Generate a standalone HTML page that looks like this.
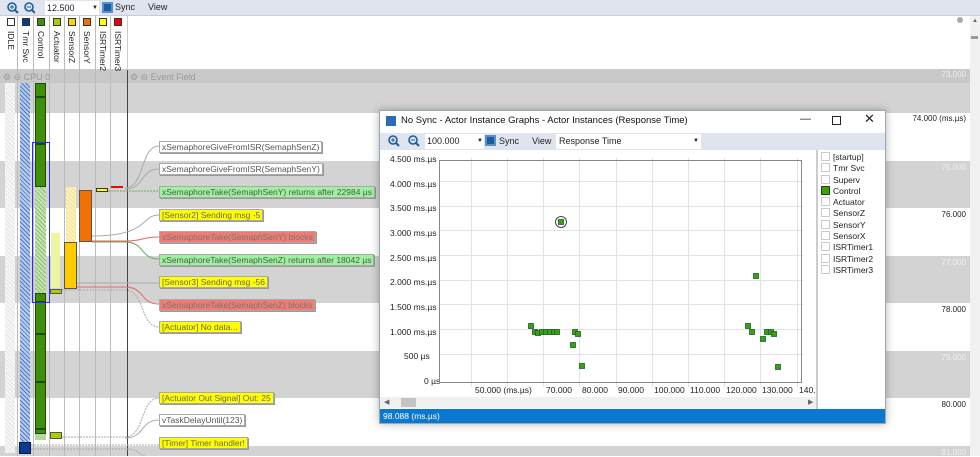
<!DOCTYPE html>
<html><head><meta charset="utf-8"><style>
*{margin:0;padding:0;box-sizing:border-box}
body{width:980px;height:456px;overflow:hidden;background:#fff;font-family:"Liberation Sans",sans-serif;font-size:9px;position:relative;color:#222}
.a{position:absolute}
.band{position:absolute;left:0;width:970px;background:#d3d3d3}
.tick{position:absolute;right:14px;font-size:8px}
.vt{position:absolute;writing-mode:vertical-rl;font-size:8.5px;top:31px;color:#222}
.sq{position:absolute;top:18px;width:8px;height:8px;border:1px solid #333}
.lab{position:absolute;left:159px;height:12px;line-height:11px;padding:0 2px;border:1px solid #aaa;box-shadow:1px 1px 0 #999;font-size:8.5px;color:#555;white-space:nowrap}
.y{background:#ffff00;color:#666}
.g{background:#9df29d;color:#555}
.r{background:#f07b73;color:#777}
.w{background:#fff}
.vl{position:absolute;top:16px;width:1px;height:440px;background:#bbb}
.hatch{background:repeating-linear-gradient(45deg,#4a7cc8 0 1px,#b9cbe8 1px 3px)}
.gb{position:absolute;left:35px;width:11px;background:#3f8f0a;border:1px solid #1d4a00}
.yl{position:absolute;font-size:8.5px;line-height:1}
</style></head><body>
<div class="a" style="left:0;top:0;width:980px;height:16px;background:#dfe4ee;border-bottom:1px solid #c8cdd6"></div>
<svg class="a" style="left:7px;top:2px" width="28" height="12"><circle cx="5" cy="5" r="4" fill="none" stroke="#1b5e9e" stroke-width="1.6"/><line x1="8" y1="8" x2="11" y2="11" stroke="#1b5e9e" stroke-width="2"/><path d="M3 5h4M5 3v4" stroke="#1b5e9e"/><circle cx="22" cy="5" r="4" fill="none" stroke="#1b5e9e" stroke-width="1.6"/><line x1="25" y1="8" x2="28" y2="11" stroke="#1b5e9e" stroke-width="2"/><path d="M20 5h4" stroke="#1b5e9e"/></svg>
<div class="a" style="left:45px;top:1px;width:54px;height:14px;background:#fff;font-size:9px;line-height:14px;padding-left:2px">12.500</div>
<div class="a" style="left:92px;top:5px;font-size:6px">▼</div>
<div class="a" style="left:102px;top:2px;width:11px;height:11px;background:#1b5e9e;border:2px solid #5a8fd0"></div>
<div class="a" style="left:115px;top:2px;font-size:9px">Sync</div>
<div class="a" style="left:148px;top:2px;font-size:9px">View</div>
<div class="a" style="left:0;top:16px;width:970px;height:54px;background:#fff;border-bottom:1px solid #ccc"></div>
<div class="a" style="left:970px;top:16px;width:10px;height:440px;background:#f0f0f0"></div>
<div class="a" style="left:972px;top:18px;font-size:6px;color:#666">▲</div>
<div class="a" style="left:971px;top:36px;width:7px;height:3px;background:#999"></div>
<div class="a" style="left:957px;top:17px;width:6px;height:6px;border-radius:50%;background:#aaa"></div>
<div class="band" style="top:70px;height:13px;background:#c8c8c8"></div>
<div class="band" style="top:83px;height:30px"></div>
<div class="band" style="top:161px;height:47px"></div>
<div class="band" style="top:256px;height:47px"></div>
<div class="band" style="top:351px;height:47px"></div>
<div class="band" style="top:446px;height:10px"></div>
<div class="tick" style="top:70px;color:#eee">73.000</div>
<div class="tick" style="top:114px">74.000 (ms.µs)</div>
<div class="tick" style="top:163px;color:#eee">75.000</div>
<div class="tick" style="top:210px">76.000</div>
<div class="tick" style="top:258px;color:#eee">77.000</div>
<div class="tick" style="top:305px">78.000</div>
<div class="tick" style="top:353px;color:#eee">79.000</div>
<div class="tick" style="top:400px">80.000</div>
<div class="tick" style="top:448px;color:#eee">81.000</div>
<div class="vl" style="left:17px"></div><div class="vl" style="left:33px"></div><div class="vl" style="left:49px"></div><div class="vl" style="left:64px"></div><div class="vl" style="left:79px"></div><div class="vl" style="left:95px"></div><div class="vl" style="left:110px"></div>
<div class="a" style="left:127px;top:70px;width:1px;height:386px;background:#444"></div>
<div class="a" style="left:127px;top:16px;width:1px;height:54px;background:#ccc"></div>
<div class="sq" style="left:7px;background:#fff"></div><div class="sq" style="left:22px;background:#0a3a8c"></div><div class="sq" style="left:37px;background:#3f8f0a"></div><div class="sq" style="left:53px;background:#a8d000"></div><div class="sq" style="left:68px;background:#ffd200"></div><div class="sq" style="left:83px;background:#f07000"></div><div class="sq" style="left:99px;background:#ffff00"></div><div class="sq" style="left:114px;background:#f00000"></div>
<div class="vt" style="left:6px">IDLE</div><div class="vt" style="left:21px">Tmr Svc</div><div class="vt" style="left:36px">Control</div><div class="vt" style="left:52px">Actuator</div><div class="vt" style="left:67px">SensorZ</div><div class="vt" style="left:82px">SensorY</div><div class="vt" style="left:98px">ISRTimer2</div><div class="vt" style="left:113px">ISRTimer3</div>
<div class="a" style="left:3px;top:72px;color:#999;font-size:9px">⚙ ⊖ CPU 0</div>
<div class="a" style="left:130px;top:72px;color:#999;font-size:9px">⚙ ⊖ Event Field</div>
<div class="a" style="left:5px;top:83px;width:10px;height:370px;background:repeating-linear-gradient(45deg,#e6e6e6 0 1px,#f6f6f6 1px 3px)"></div>
<div class="a hatch" style="left:20px;top:83px;width:10px;height:360px"></div>
<div class="a" style="left:19px;top:442px;width:12px;height:12px;background:#0a3a8c;border:1px solid #001a50"></div>
<div class="gb" style="top:83px;height:14px"></div>
<div class="gb" style="top:97px;height:47px"></div>
<div class="gb" style="top:144px;height:43px"></div>
<div class="a" style="left:35px;top:187px;width:11px;height:106px;background:repeating-linear-gradient(45deg,#8cc06a 0 1px,#c8e4b4 1px 3px)"></div>
<div class="gb" style="top:293px;height:9px"></div>
<div class="gb" style="top:302px;height:32px"></div>
<div class="gb" style="top:334px;height:48px"></div>
<div class="gb" style="top:382px;height:47px"></div>
<div class="gb" style="top:429px;height:5px"></div>
<div class="a" style="left:35px;top:434px;width:11px;height:6px;background:#b4d89c"></div>
<div class="a" style="left:32px;top:142px;width:18px;height:161px;border:1.5px solid #2a2aff"></div>
<div class="a" style="left:51px;top:233px;width:9px;height:55px;background:#eef5a0"></div>
<div class="a" style="left:50px;top:289px;width:12px;height:5px;background:#a8d000;border:1px solid #555"></div>
<div class="a" style="left:50px;top:432px;width:12px;height:7px;background:#a8d000;border:1px solid #555"></div>
<div class="a" style="left:66px;top:187px;width:10px;height:55px;background:repeating-linear-gradient(45deg,#f5e08a 0 1px,#fdf3c2 1px 3px)"></div>
<div class="a" style="left:64px;top:242px;width:13px;height:47px;background:#ffcc00;border:1px solid #555"></div>
<div class="a" style="left:79px;top:190px;width:13px;height:52px;background:#f07000;border:1px solid #555"></div>
<div class="a" style="left:96px;top:188px;width:12px;height:4px;background:#ffff00;border:1px solid #333"></div>
<div class="a" style="left:111px;top:186px;width:12px;height:2px;background:#f00"></div>
<svg class="a" style="left:0;top:0" width="380" height="456" fill="none" stroke-width="1">
<path d="M125 188 C145 188,140 146,159 146" stroke="#aaa"/>
<path d="M125 189 C145 189,140 169,159 169" stroke="#aaa"/>
<path d="M108 191 H159" stroke="#6a6" stroke-dasharray="2 1"/>
<path d="M92 236 C150 236,140 215,159 215" stroke="#aaa"/>
<path d="M92 241 H125 C145 241,140 237,159 237" stroke="#e66"/>
<path d="M92 242 H125 C145 242,140 259,159 259" stroke="#6a6"/>
<path d="M77 283 H159" stroke="#aaa"/>
<path d="M77 287 H125 C145 287,140 304,159 304" stroke="#e66"/>
<path d="M62 290 H125 C145 290,140 327,159 327" stroke="#aaa" stroke-dasharray="2 1"/>
<path d="M62 437 H125 C145 437,140 398,159 398" stroke="#aaa" stroke-dasharray="2 1"/>
<path d="M125 438 C145 438,140 420,159 420" stroke="#aaa"/>
<path d="M31 445 H159" stroke="#aaa" stroke-dasharray="2 1"/>
<path d="M31 449 H125 C140 449,140 456,145 456" stroke="#aaa" stroke-dasharray="2 1"/>
</svg>
<div class="lab w" style="top:141px">xSemaphoreGiveFromISR(SemaphSenZ)</div>
<div class="lab w" style="top:163px">xSemaphoreGiveFromISR(SemaphSenY)</div>
<div class="lab g" style="top:186px">xSemaphoreTake(SemaphSenY) returns after 22984 µs</div>
<div class="lab y" style="top:209px">[Sensor2] Sending msg -5</div>
<div class="lab r" style="top:231px">xSemaphoreTake(SemaphSenY) blocks</div>
<div class="lab g" style="top:254px">xSemaphoreTake(SemaphSenZ) returns after 18042 µs</div>
<div class="lab y" style="top:276px">[Sensor3] Sending msg -56</div>
<div class="lab r" style="top:299px">xSemaphoreTake(SemaphSenZ) blocks</div>
<div class="lab y" style="top:321px">[Actuator] No data...</div>
<div class="lab y" style="top:392px">[Actuator Out Signal] Out: 25</div>
<div class="lab w" style="top:414px">vTaskDelayUntil(123)</div>
<div class="lab y" style="top:437px">[Timer] Timer handler!</div>
<div class="a" style="left:379px;top:110px;width:507px;height:314px;background:#fff;border:1px solid #9aa;box-shadow:0 0 8px rgba(0,0,0,.3)">
 <div class="a" style="left:6px;top:5px;width:10px;height:10px;background:#2a6cb5"></div>
 <div class="a" style="left:21px;top:4px;font-size:9.5px;color:#111">No Sync - Actor Instance Graphs - Actor Instances (Response Time)</div>
 <div class="a" style="left:420px;top:2px;font-size:11px">—</div>
 <div class="a" style="left:452px;top:5px;width:9px;height:9px;border:1px solid #222"></div>
 <div class="a" style="left:484px;top:0;font-size:13px">✕</div>
 <div class="a" style="left:0;top:22px;width:505px;height:17px;background:#dfe4ee"></div>
 <svg class="a" style="left:8px;top:24px" width="34" height="13"><circle cx="5" cy="5" r="4" fill="none" stroke="#1b5e9e" stroke-width="1.6"/><line x1="8" y1="8" x2="11" y2="11" stroke="#1b5e9e" stroke-width="2"/><path d="M3 5h4M5 3v4" stroke="#1b5e9e"/><circle cx="25" cy="5" r="4" fill="none" stroke="#1b5e9e" stroke-width="1.6"/><line x1="28" y1="8" x2="31" y2="11" stroke="#1b5e9e" stroke-width="2"/><path d="M23 5h4" stroke="#1b5e9e"/></svg>
 <div class="a" style="left:45px;top:23px;width:59px;height:15px;background:#fff;line-height:15px;padding-left:2px">100.000</div>
 <div class="a" style="left:97px;top:27px;font-size:6px">▼</div>
 <div class="a" style="left:105px;top:24px;width:11px;height:11px;background:#1b5e9e;border:2px solid #5a8fd0"></div>
 <div class="a" style="left:119px;top:25px">Sync</div>
 <div class="a" style="left:152px;top:25px">View</div>
 <div class="a" style="left:176px;top:23px;width:145px;height:15px;background:#fff;line-height:15px;padding-left:3px">Response Time</div>
 <div class="a" style="left:313px;top:27px;font-size:6px">▼</div>
 <div class="yl" style="left:10px;top:44px">4.500 ms.µs</div>
 <div class="yl" style="left:10px;top:69px">4.000 ms.µs</div>
 <div class="yl" style="left:10px;top:93px">3.500 ms.µs</div>
 <div class="yl" style="left:10px;top:118px">3.000 ms.µs</div>
 <div class="yl" style="left:10px;top:143px">2.500 ms.µs</div>
 <div class="yl" style="left:10px;top:167px">2.000 ms.µs</div>
 <div class="yl" style="left:10px;top:192px">1.500 ms.µs</div>
 <div class="yl" style="left:10px;top:217px">1.000 ms.µs</div>
 <div class="yl" style="left:24px;top:241px">500 µs</div>
 <div class="yl" style="left:44px;top:266px">0 µs</div>
 <svg class="a" style="left:58px;top:46px" width="370" height="260">
  <g stroke="#e2e2e2">
   <path d="M1 24.5H365M1 49.5H365M1 73.5H365M1 98.5H365M1 123.5H365M1 147.5H365M1 172.5H365M1 197.5H365"/>
   <path d="M33.5 1V230M69.5 1V230M105.5 1V230M141.5 1V230M178.5 1V230M214.5 1V230M250.5 1V230M286.5 1V230M322.5 1V230M359.5 1V230"/>
  </g>
  <rect x="1.5" y="3.5" width="362" height="222" fill="none" stroke="#888"/>
  <circle cx="123" cy="65" r="5.5" fill="none" stroke="#444"/>
  <g fill="#3f9f0a" stroke="#163" stroke-width="0.8">
   <rect x="120.5" y="62.5" width="5" height="5"/>
   <rect x="90.5" y="166.5" width="5" height="5"/>
   <rect x="94.5" y="172.5" width="5" height="5"/>
   <rect x="97.5" y="173.5" width="5" height="5"/>
   <rect x="101.5" y="172.5" width="5" height="5"/><rect x="105.5" y="172.5" width="5" height="5"/><rect x="109.5" y="172.5" width="5" height="5"/><rect x="113.5" y="172.5" width="5" height="5"/><rect x="116.5" y="172.5" width="5" height="5"/>
   <rect x="134.5" y="172.5" width="5" height="5"/>
   <rect x="137.5" y="174.5" width="5" height="5"/>
   <rect x="132.5" y="185.5" width="5" height="5"/>
   <rect x="141.5" y="206.5" width="5" height="5"/>
   <rect x="315.5" y="116.5" width="5" height="5"/>
   <rect x="307.5" y="166.5" width="5" height="5"/>
   <rect x="311.5" y="172.5" width="5" height="5"/>
   <rect x="322.5" y="179.5" width="5" height="5"/>
   <rect x="326.5" y="172.5" width="5" height="5"/>
   <rect x="330.5" y="172.5" width="5" height="5"/>
   <rect x="333.5" y="174.5" width="5" height="5"/>
   <rect x="337.5" y="207.5" width="5" height="5"/>
  </g>
 </svg>
 <div class="a" style="left:95px;top:274px;font-size:8.5px">50.000 (ms.µs)</div>
 <div class="a" style="left:166px;top:274px;font-size:8.5px">70.000</div>
 <div class="a" style="left:202px;top:274px;font-size:8.5px">80.000</div>
 <div class="a" style="left:238px;top:274px;font-size:8.5px">90.000</div>
 <div class="a" style="left:274px;top:274px;font-size:8.5px">100.000</div>
 <div class="a" style="left:310px;top:274px;font-size:8.5px">110.000</div>
 <div class="a" style="left:346px;top:274px;font-size:8.5px">120.000</div>
 <div class="a" style="left:382px;top:274px;font-size:8.5px">130.000</div>
 <div class="a" style="left:419px;top:274px;font-size:8.5px">140.</div>
 <div class="a" style="left:0;top:286px;width:437px;height:11px;background:#f0f0f0"></div>
 <div class="a" style="left:4px;top:287px;font-size:7px;color:#666">◀</div>
 <div class="a" style="left:428px;top:287px;font-size:7px;color:#666">▶</div>
 <div class="a" style="left:21px;top:287px;width:15px;height:9px;background:#c4c4c4"></div>
 <div class="a" style="left:436px;top:39px;width:2px;height:259px;background:#ccc"></div>
 <div class="a" style="left:0;top:298px;width:505px;height:14px;background:#0a78d0;color:#fff;font-size:8.5px;line-height:14px;padding-left:3px">98.088 (ms.µs)</div>
 <div class="a" style="left:441px;top:41px;font-size:8.5px;line-height:11.3px;color:#222">
  <div><span style="display:inline-block;width:9px;height:9px;border:1px solid #ccc;vertical-align:-1px;margin-right:3px"></span>[startup]</div>
  <div><span style="display:inline-block;width:9px;height:9px;border:1px solid #ccc;vertical-align:-1px;margin-right:3px"></span>Tmr Svc</div>
  <div><span style="display:inline-block;width:9px;height:9px;border:1px solid #ccc;vertical-align:-1px;margin-right:3px"></span>Superv</div>
  <div><span style="display:inline-block;width:9px;height:9px;border:1px solid #1d4a00;background:#3f9f0a;vertical-align:-1px;margin-right:3px"></span>Control</div>
  <div><span style="display:inline-block;width:9px;height:9px;border:1px solid #ccc;vertical-align:-1px;margin-right:3px"></span>Actuator</div>
  <div><span style="display:inline-block;width:9px;height:9px;border:1px solid #ccc;vertical-align:-1px;margin-right:3px"></span>SensorZ</div>
  <div><span style="display:inline-block;width:9px;height:9px;border:1px solid #ccc;vertical-align:-1px;margin-right:3px"></span>SensorY</div>
  <div><span style="display:inline-block;width:9px;height:9px;border:1px solid #ccc;vertical-align:-1px;margin-right:3px"></span>SensorX</div>
  <div><span style="display:inline-block;width:9px;height:9px;border:1px solid #ccc;vertical-align:-1px;margin-right:3px"></span>ISRTimer1</div>
  <div><span style="display:inline-block;width:9px;height:9px;border:1px solid #ccc;vertical-align:-1px;margin-right:3px"></span>ISRTimer2</div>
  <div><span style="display:inline-block;width:9px;height:9px;border:1px solid #ccc;vertical-align:-1px;margin-right:3px"></span>ISRTimer3</div>
 </div>
</div>
</body></html>
